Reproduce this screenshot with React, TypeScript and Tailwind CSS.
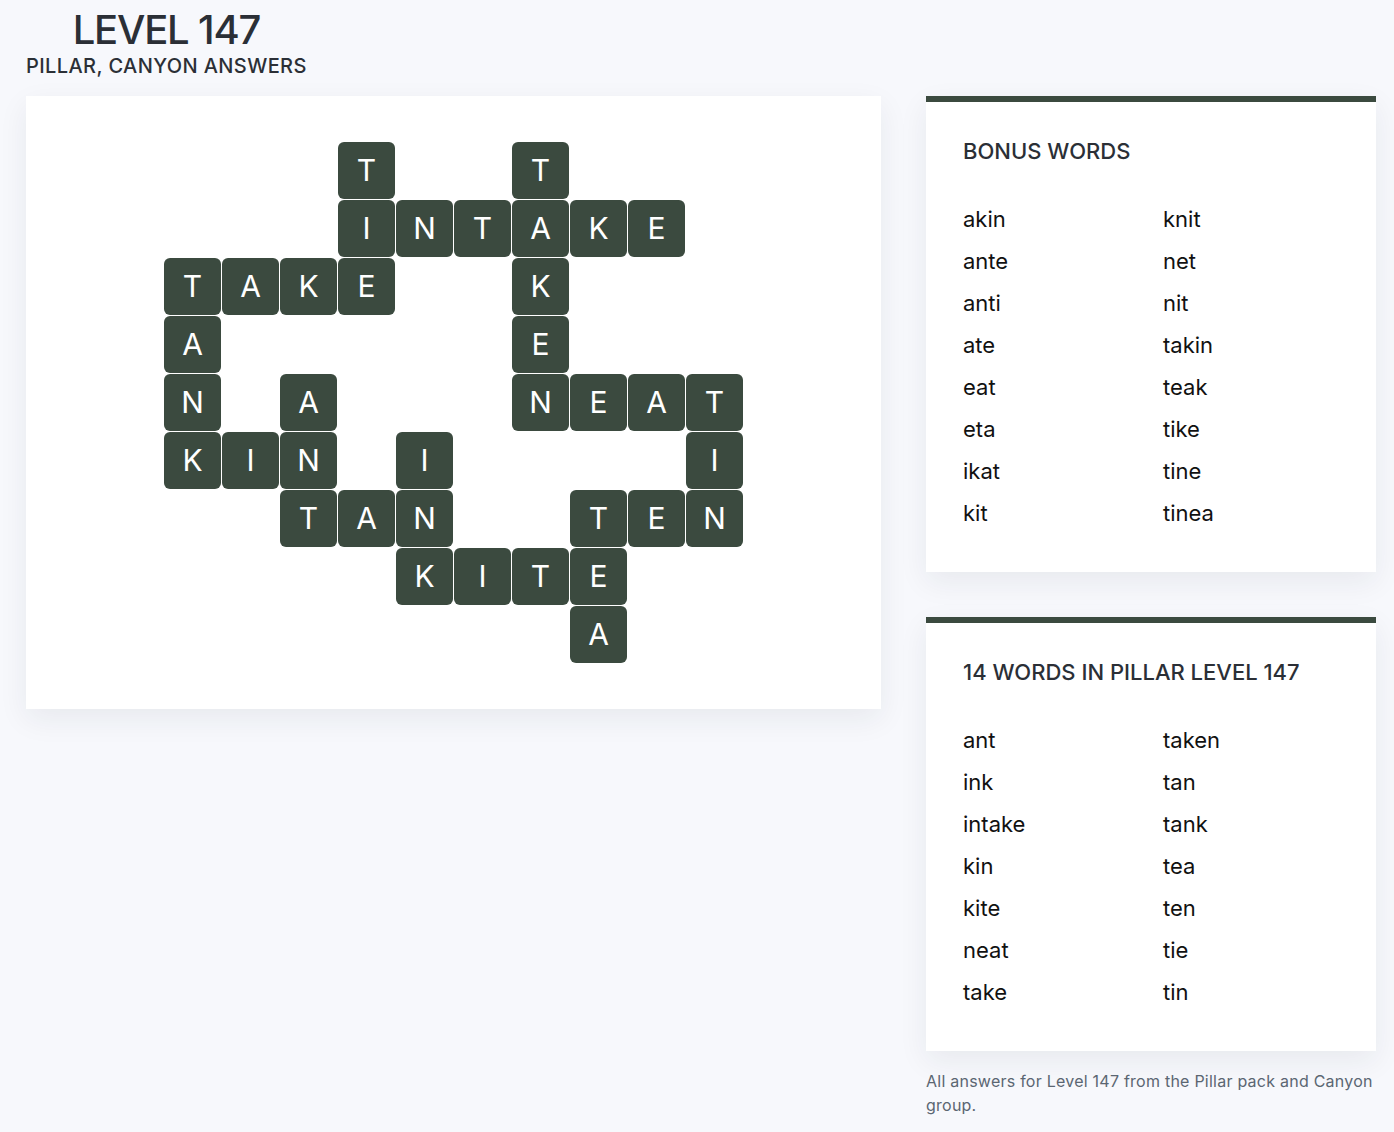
import React from 'react';

// Crossword layout: each row is 10 cells wide, '.' is an empty cell
const GRID: string[] = [
  '...T..T...',
  '...INTAKE.',
  'TAKE..K...',
  'A.....E...',
  'N.A...NEAT',
  'KIN.I....I',
  '..TAN..TEN',
  '....KITE..',
  '.......A..',
];

const BONUS_WORDS = ['akin', 'knit', 'ante', 'net', 'anti', 'nit', 'ate', 'takin', 'eat', 'teak', 'eta', 'tike', 'ikat', 'tine', 'kit', 'tinea'];
const LEVEL_WORDS = ['ant', 'taken', 'ink', 'tan', 'intake', 'tank', 'kin', 'tea', 'kite', 'ten', 'neat', 'tie', 'take', 'tin'];

const WordPanel: React.FC<{ title: string; words: string[] }> = ({ title, words }) => (
  <section className="bg-white border-t-[6px] border-[#3b4a3f] px-[37px] pt-[35px] pb-[38px] shadow-[0_10px_28px_rgba(30,41,59,0.07)]">
    <h2 className="text-[22px] leading-[28px] font-medium text-[#2b2f36]">{title}</h2>
    <ul className="mt-[33px] grid grid-cols-[200px_1fr]">
      {words.map((w) => (
        <li key={w} className="text-[22px] leading-[42px] text-[#111]">
          {w}
        </li>
      ))}
    </ul>
  </section>
);

export default function App() {
  return (
    <div className="min-h-screen bg-[#f7f8fc] pl-[26px] pr-[18px] pb-4 font-['Inter',sans-serif]">
      <header className="inline-block pt-[10px] text-center text-[#2b2f36]">
        <h1 className="text-[40px] leading-[40px] font-medium tracking-[-0.03em]">LEVEL 147</h1>
        <p className="mt-[2px] text-[20px] leading-[28px] font-medium tracking-[0.02em]">PILLAR, CANYON ANSWERS</p>
      </header>

      <div className="mt-[16px] flex items-start gap-[45px]">
        <div className="w-[855px] h-[613px] shrink-0 bg-white flex items-center justify-center shadow-[0_10px_28px_rgba(30,41,59,0.07)]">
          <div className="grid grid-cols-[repeat(10,57px)] grid-rows-[repeat(9,57px)] gap-[1px]">
            {GRID.flatMap((row, r) =>
              row.split('').map((ch, c) =>
                ch === '.' ? (
                  <div key={`${r}-${c}`} />
                ) : (
                  <div
                    key={`${r}-${c}`}
                    className="rounded-[6px] bg-[#3b4a3f] text-white text-[30px] flex items-center justify-center"
                  >
                    {ch}
                  </div>
                )
              )
            )}
          </div>
        </div>

        <aside className="w-[450px] shrink-0 flex flex-col">
          <WordPanel title="BONUS WORDS" words={BONUS_WORDS} />
          <div className="mt-[45px]">
            <WordPanel title="14 WORDS IN PILLAR LEVEL 147" words={LEVEL_WORDS} />
          </div>
          <p className="mt-[18px] text-[16px] leading-[24px] tracking-[0.015em] text-[#5b6672]">
            All answers for Level 147 from the Pillar pack and Canyon group.
          </p>
        </aside>
      </div>
    </div>
  );
}
